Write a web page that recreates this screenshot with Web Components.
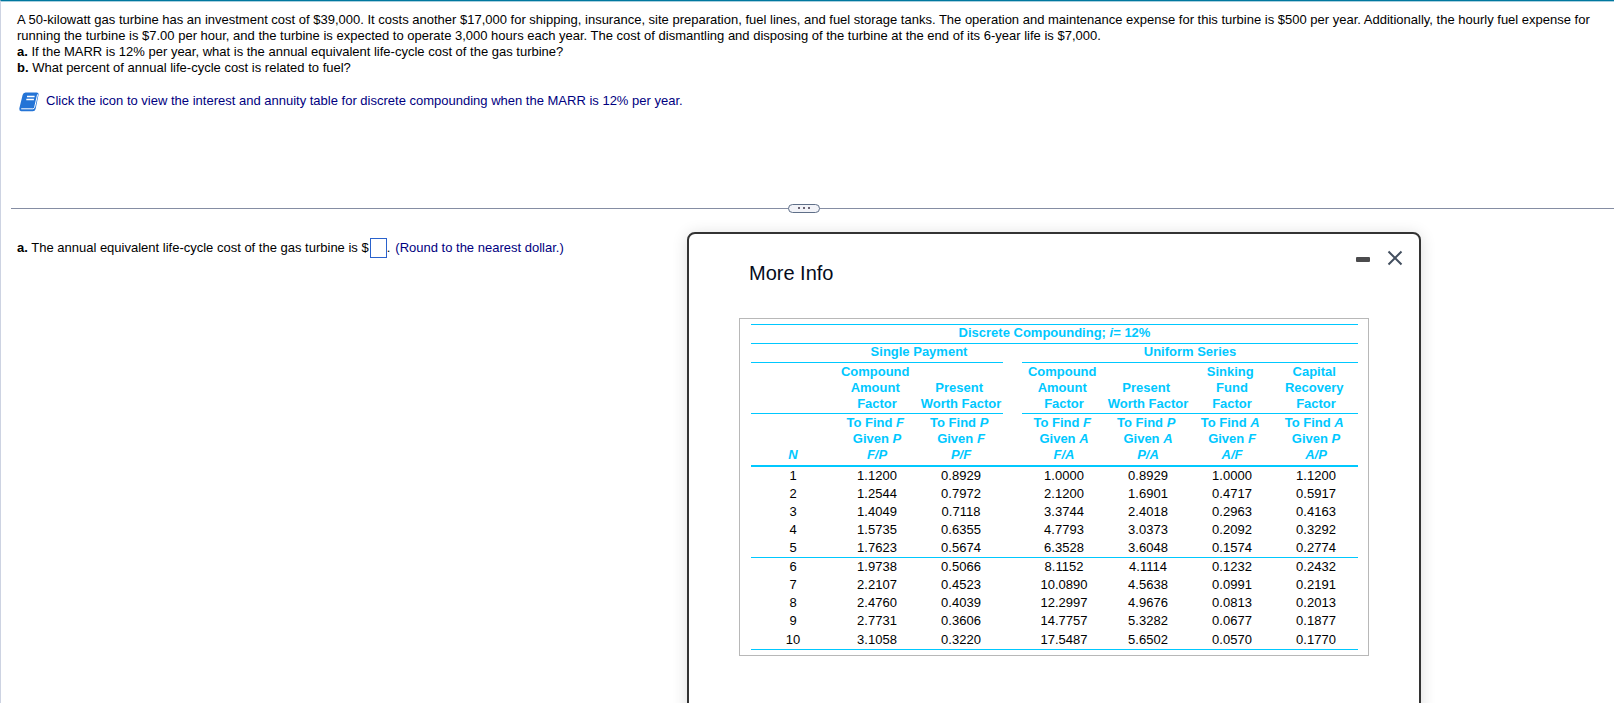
<!DOCTYPE html>
<html lang="en">
<head>
<meta charset="utf-8">
<title>Life-cycle cost exercise</title>
<style>
  body { margin: 0; font: 13px/16px "Liberation Sans", Arial, sans-serif; color: #000; background: #fff; }
</style>
</head>
<body>
<exercise-page>
  <question-text slot="question">
    <p>A 50-kilowatt gas turbine has an investment cost of $39,000. It costs another $17,000 for shipping, insurance, site preparation, fuel lines, and fuel storage tanks. The operation and maintenance expense for this turbine is $500 per year. Additionally, the hourly fuel expense for running the turbine is $7.00 per hour, and the turbine is expected to operate 3,000 hours each year. The cost of dismantling and disposing of the turbine at the end of its 6-year life is $7,000.</p>
    <p><b>a.</b> If the MARR is 12% per year, what is the annual equivalent life-cycle cost of the gas turbine?</p>
    <p><b>b.</b> What percent of annual life-cycle cost is related to fuel?</p>
    <resource-link slot="resource">Click the icon to view the interest and annuity table for discrete compounding when the MARR is 12% per year.</resource-link>
  </question-text>
  <pane-divider slot="divider"></pane-divider>
  <answer-line slot="answer">
    <span slot="before"><b>a.</b> The annual equivalent life-cycle cost of the gas turbine is $</span>
    <span slot="hint">(Round to the nearest dollar.)</span>
  </answer-line>
  <info-dialog slot="dialog">
    <span slot="title">More Info</span>
    <factor-table></factor-table>
  </info-dialog>
</exercise-page>

<script>
function define(name, html, setup) {
  const template = document.createElement('template');
  template.innerHTML = html;
  customElements.define(name, class extends HTMLElement {
    constructor() {
      super();
      const root = this.attachShadow({ mode: 'open' });
      root.append(template.content.cloneNode(true));
      if (setup) setup(root);
    }
  });
}

define('exercise-page', `
  <style>
    :host { display: block; position: relative; box-sizing: border-box; min-height: 100vh; overflow: hidden;
            border-top: 1px solid #00789f; border-left: 1px solid #cdd3e2; }
    main { box-shadow: inset 0 1px #a9d0df; }
    .question { padding: 11px 16px 0; min-height: 192px; box-sizing: border-box; }
    .answer { padding: 15px 16px 0; }
  </style>
  <main>
    <div class="question"><slot name="question"></slot></div>
    <slot name="divider"></slot>
    <div class="answer"><slot name="answer"></slot></div>
  </main>
  <slot name="dialog"></slot>
`);

define('question-text', `
  <style>
    :host { display: block; }
    ::slotted(p) { margin: 0; }
    .resource { margin-top: 16px; }
  </style>
  <slot></slot>
  <div class="resource"><slot name="resource"></slot></div>
`);

define('resource-link', `
  <style>
    :host { display: flex; align-items: flex-start; gap: 7px; padding-left: 2px; color: #000080; }
    button { flex: none; width: 20px; height: 20px; padding: 0; border: 0; background: none; cursor: pointer; }
    svg { display: block; }
    span { padding-top: 1px; }
  </style>
  <button type="button" aria-label="View table">
    <svg width="20" height="20" viewBox="0 0 20 20">
      <path d="M6.5.5H17.6Q19.8.5 19.6 2.6L16.6 17Q16 19.3 13.8 19.3H2.2Q0 19.1.3 16.6L3.6 3Q4.2.5 6.5.5Z" fill="#2474d6"/>
      <path d="M18.6 2.4L15.6 15.4Q15.2 16.8 13.8 16.8H2.2" fill="none" stroke="#fff" stroke-width="1"/>
      <path d="M8 4.5H15.6M7.3 7.5H14.9" stroke="#fff" stroke-width="1.3"/>
    </svg>
  </button>
  <span><slot></slot></span>
`);

define('pane-divider', `
  <style>
    :host { display: flex; align-items: center; height: 30px; margin-left: 10px; }
    i { flex: 1; height: 1px; background: #858da3; }
    i:first-of-type { margin-right: -1px; }
    i:last-of-type { margin-left: -1px; }
    /* The handle sits on the middle of the page, not of the shorter line. */
    .tail { flex: 1; margin-right: 0; padding-right: 17px; }
    button { position: relative; display: flex; align-items: center; justify-content: center; gap: 3px; box-sizing: border-box;
             width: 32px; height: 9px; padding: 0; border: 1px solid #5f6f88; border-radius: 5px; background: #f2f3f8; }
    b { width: 2px; height: 2px; background: #6a6473; }
  </style>
  <i></i><button type="button" aria-label="Resize panes"><b></b><b></b><b></b></button><i class="tail"></i>
`);

define('answer-line', `
  <style>
    :host { display: flex; align-items: center; }
    input { box-sizing: border-box; width: 17px; height: 20px; margin: 0 0 0 1px; padding: 0 2px; font: inherit;
            border: 1px solid #2a62cc; border-radius: 0; outline: 0; background: #fff; }
    .dot { margin-right: 5px; }
    .hint { color: #000080; }
  </style>
  <label for="amount"><slot name="before"></slot></label>
  <input id="amount" type="text" autocomplete="off">
  <span class="dot">.</span>
  <span class="hint"><slot name="hint"></slot></span>
`);

define('info-dialog', `
  <style>
    /* The panel floats above the page and runs on below the fold. */
    :host { position: absolute; top: 231px; left: 686px; bottom: -16px; width: 734px; box-sizing: border-box;
            border: 2px solid #333; border-radius: 8px; background: #fff; box-shadow: 0 2px 16px rgba(0,0,0,.14); }
    header { display: flex; align-items: flex-start; padding: 16px 16px 0 60px; }
    h2 { flex: 1; margin: 0; padding-top: 11px; font-size: 20px; line-height: 24px; font-weight: 400; color: #050c1c; }
    button { flex: none; width: 16px; height: 16px; padding: 0; margin-left: 16px; border: 0; background: none; }
    svg { display: block; }
    .body { padding: 33px 50px 0; }
  </style>
  <header>
    <h2><slot name="title"></slot></h2>
    <button type="button" aria-label="Minimize"><svg width="16" height="16"><rect x="1" y="7" width="14" height="5" rx="1" fill="#4b4b4d"/></svg></button>
    <button type="button" aria-label="Close"><svg width="16" height="16"><path d="M1.5 1.5L14.5 14.5M14.5 1.5L1.5 14.5" stroke="#434f5f" stroke-width="2" fill="none"/></svg></button>
  </header>
  <div class="body"><slot></slot></div>
`);

define('factor-table', `
  <style>
    :host { display: block; border: 1px solid #b8b8b8; padding: 5px 10px 5px 11px; }
    table { width: 100%; table-layout: fixed; border-collapse: separate; border-spacing: 0; text-align: center; }
    col.gap { width: 19px; }
    th, td { padding: 0; }
    th { color: #00c8ff; font-weight: 700; vertical-align: bottom; box-sizing: border-box; }
    .rule { border-top: 1px solid #00c8ff; }
    .title th { height: 19px; padding-bottom: 2px; }
    .names th { height: 51px; padding-bottom: 1px; }
    .finds th { height: 52px; padding-bottom: 2px; }
    td { height: 18px; }
    tbody tr:first-child > * { border-top: 2px solid #00c8ff; }
    tbody tr:nth-child(6) > * { border-top: 1px solid #00c8ff; }
    tbody tr:last-child > * { border-bottom: 1px solid #00c8ff; height: 19px; }
  </style>
  <table>
    <colgroup><col><col><col><col class="gap"><col><col><col><col></colgroup>
    <thead>
      <tr class="title"><th class="rule" colspan="8">Discrete Compounding; <i>i</i>= 12%</th></tr>
      <tr class="title"><th class="rule"></th><th class="rule" colspan="2">Single Payment</th><th class="rule"></th><th class="rule" colspan="4">Uniform Series</th></tr>
      <tr class="names"><th class="rule"></th><th class="rule">Compound&nbsp;<br>Amount&nbsp;<br>Factor</th><th class="rule">Present&nbsp;<br>Worth Factor</th><th></th><th class="rule">Compound&nbsp;<br>Amount&nbsp;<br>Factor</th><th class="rule">Present&nbsp;<br>Worth Factor</th><th class="rule">Sinking&nbsp;<br>Fund<br>Factor</th><th class="rule">Capital&nbsp;<br>Recovery&nbsp;<br>Factor</th></tr>
      <tr class="finds"><th class="rule"><i>N</i></th></tr>
    </thead>
    <tbody></tbody>
  </table>
`, root => {
  const finds = root.querySelector('.finds');
  for (const pair of ['FP', 'PF', '', 'FA', 'PA', 'AF', 'AP']) {
    const th = document.createElement('th');
    if (pair) {
      const [find, given] = pair;
      th.className = 'rule';
      th.innerHTML = `To Find <i>${find}</i>&nbsp;<br>Given <i>${given}</i><br><i>${find}/${given}</i>`;
    }
    finds.append(th);
  }
  const rows = [
    ['1', '1.1200', '0.8929', '', '1.0000', '0.8929', '1.0000', '1.1200'],
    ['2', '1.2544', '0.7972', '', '2.1200', '1.6901', '0.4717', '0.5917'],
    ['3', '1.4049', '0.7118', '', '3.3744', '2.4018', '0.2963', '0.4163'],
    ['4', '1.5735', '0.6355', '', '4.7793', '3.0373', '0.2092', '0.3292'],
    ['5', '1.7623', '0.5674', '', '6.3528', '3.6048', '0.1574', '0.2774'],
    ['6', '1.9738', '0.5066', '', '8.1152', '4.1114', '0.1232', '0.2432'],
    ['7', '2.2107', '0.4523', '', '10.0890', '4.5638', '0.0991', '0.2191'],
    ['8', '2.4760', '0.4039', '', '12.2997', '4.9676', '0.0813', '0.2013'],
    ['9', '2.7731', '0.3606', '', '14.7757', '5.3282', '0.0677', '0.1877'],
    ['10', '3.1058', '0.3220', '', '17.5487', '5.6502', '0.0570', '0.1770'],
  ];
  const body = root.querySelector('tbody');
  for (const row of rows) {
    const tr = body.insertRow();
    for (const value of row) tr.insertCell().textContent = value;
  }
});
</script>
</body>
</html>
